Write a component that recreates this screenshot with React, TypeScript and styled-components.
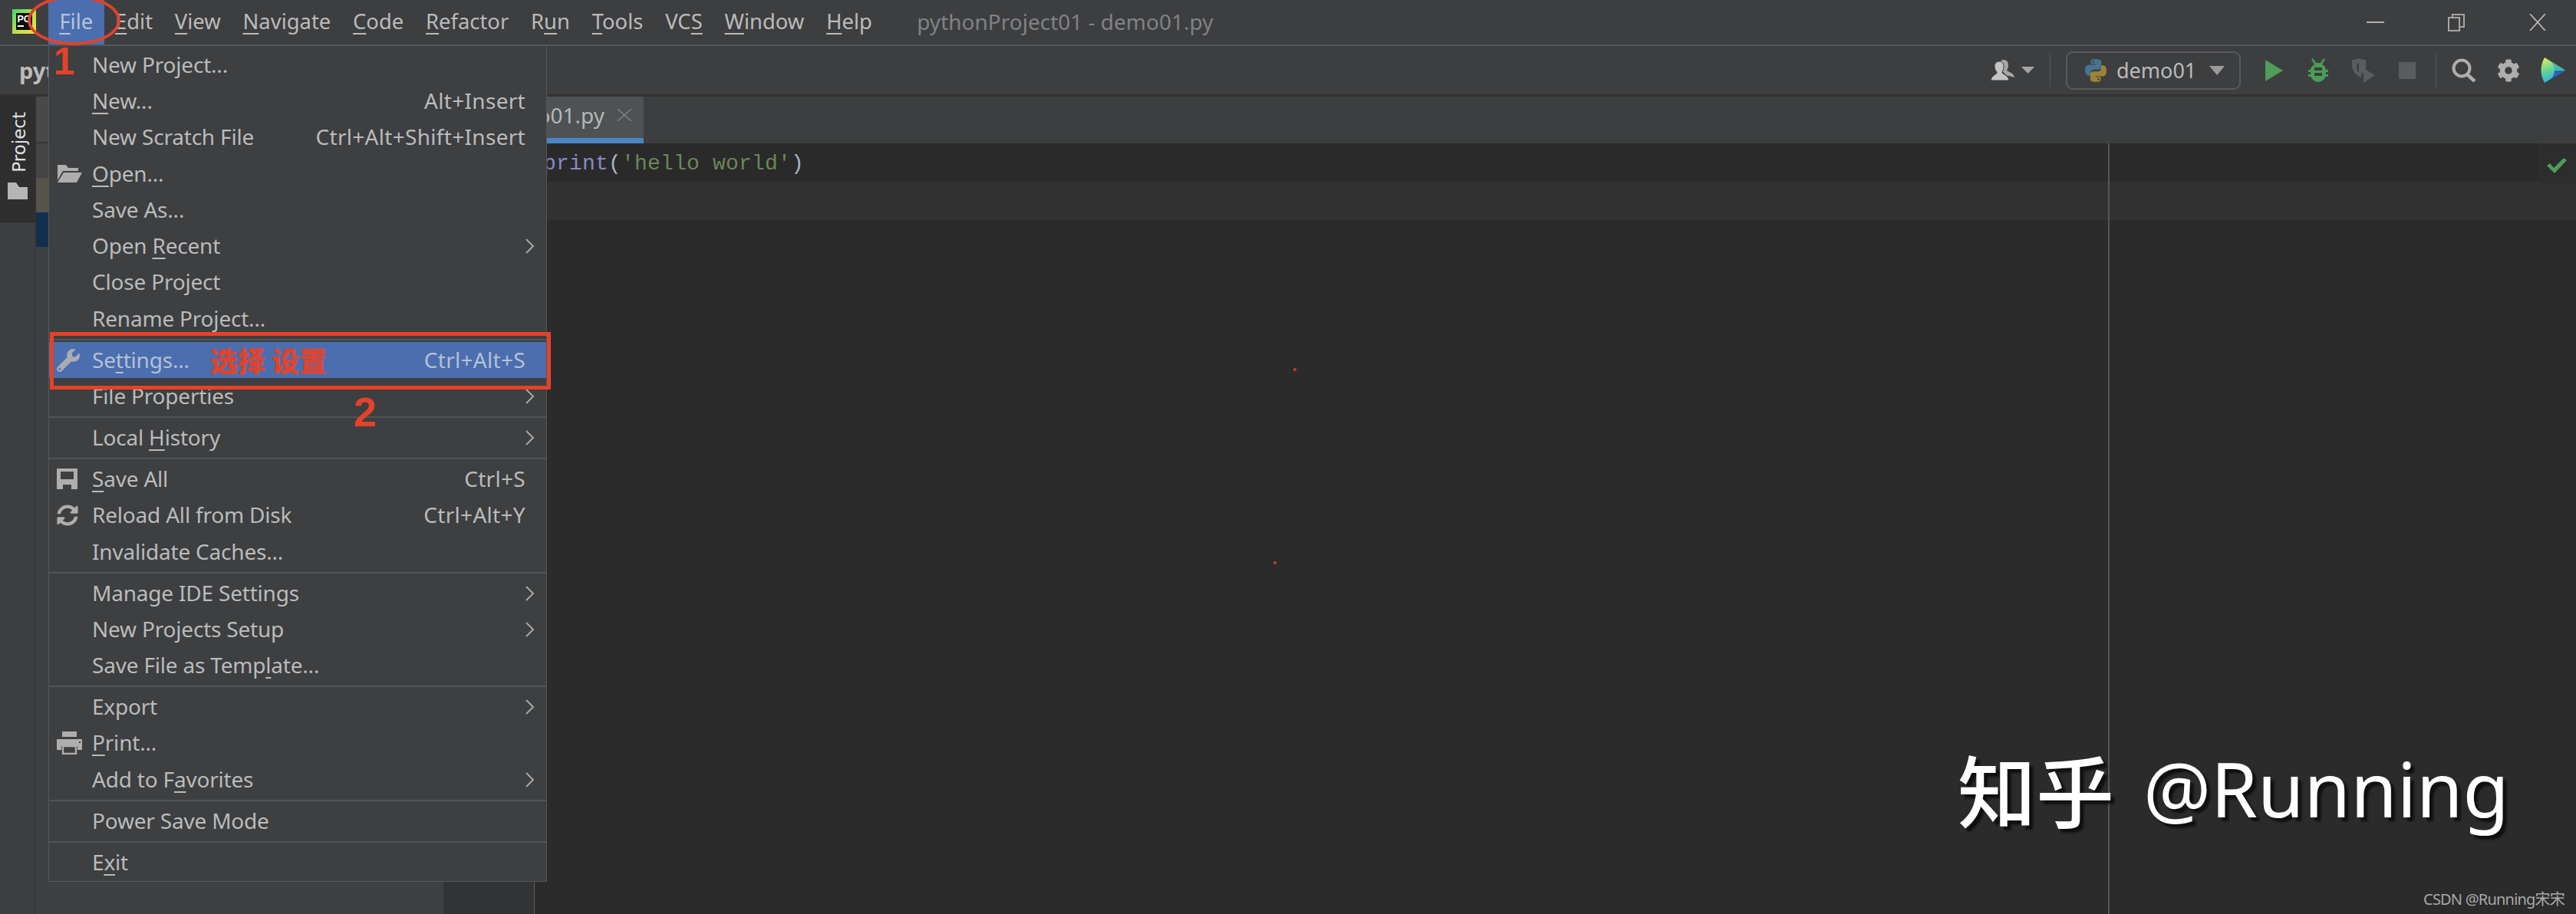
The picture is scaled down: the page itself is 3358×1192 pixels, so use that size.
import React from "react";
import styled, { createGlobalStyle } from "styled-components";
import { FaCog, FaSyncAlt, FaWrench } from "react-icons/fa";

const UI = `"Noto Sans", "Open Sans", sans-serif`;
const RED = "#e3432a";

const Global = createGlobalStyle`
  html, body { margin: 0; padding: 0; background: #2b2b2b; }
  * { box-sizing: border-box; }
`;

const Screen = styled.div`
  position: relative;
  width: 3358px;
  height: 1192px;
  overflow: hidden;
  display: flex;
  flex-direction: column;
  background: #3c3e40;
  font-family: ${UI};
  font-size: 28px;
  color: #bbbbbb;
`;

/* ---------- title bar ---------- */
const TitleBar = styled.header`
  height: 60px;
  flex: none;
  display: flex;
  align-items: stretch;
  padding-left: 16px;
  background: #3d3e40;
  border-bottom: 2px solid #545658;
`;
const LogoBox = styled.div`
  width: 47px;
  display: flex;
  align-items: flex-start;
  padding-top: 12px;
`;
const MenuBar = styled.nav`
  display: flex;
  align-items: stretch;
`;
const MenuBarItem = styled.div<{ $active?: boolean }>`
  padding: 0 14.4px 3px;
  display: flex;
  align-items: center;
  font-size: 27.4px;
  line-height: 1;
  background: ${(p) => (p.$active ? "#4b6eaf" : "transparent")};
  color: ${(p) => (p.$active ? "#b8c4da" : "#bbbbbb")};
`;
const WindowTitle = styled.div`
  margin-left: 44px;
  padding-bottom: 3px;
  display: flex;
  align-items: center;
  color: #808284;
`;
const WindowControls = styled.div`
  margin-left: auto;
  display: flex;
  gap: 6px;
`;
const WindowButton = styled.div`
  width: 100px;
  display: flex;
  align-items: center;
  justify-content: center;
`;
const Mn = styled.span`
  text-decoration: underline;
  text-decoration-thickness: 2px;
  text-underline-offset: 5px;
`;

/* ---------- toolbar ---------- */
const Toolbar = styled.div`
  height: 66px;
  flex: none;
  display: flex;
  align-items: center;
  padding-left: 25px;
  background: #3d3e40;
  border-bottom: 3px solid #323232;
`;
const ProjectName = styled.div`
  width: 38px;
  overflow: hidden;
  white-space: nowrap;
  font-weight: 700;
  font-size: 29px;
`;
const ToolGroup = styled.div`
  margin-left: auto;
  display: flex;
  align-items: center;
  padding-right: 1px;
`;
const UserButton = styled.div`
  display: flex;
  align-items: center;
  gap: 8px;
`;
const ToolSep = styled.div<{ $w: number }>`
  width: ${(p) => p.$w}px;
  height: 44px;
  display: flex;
  justify-content: center;
  &::before {
    content: "";
    width: 1px;
    background: #55575a;
  }
`;
const RunConfig = styled.div`
  width: 228px;
  height: 50px;
  margin-right: 14px;
  display: flex;
  align-items: center;
  padding-left: 21px;
  border: 2px solid #585a5c;
  border-radius: 9px;
  font-size: 27px;
  gap: 11px;
`;
const RunCaret = styled.div`
  margin-left: auto;
  margin-right: 19px;
  width: 0;
  height: 0;
  border-left: 10px solid transparent;
  border-right: 10px solid transparent;
  border-top: 12px solid #9a9a9a;
`;
const ToolSlot = styled.div`
  width: 58px;
  display: flex;
  justify-content: center;
  align-items: center;
`;

/* ---------- workspace ---------- */
const Workspace = styled.div`
  flex: 1;
  min-height: 0;
  display: flex;
`;
const ToolStrip = styled.aside`
  width: 47px;
  flex: none;
  background: #3c3e40;
  border-right: 1px solid #323335;
`;
const StripTab = styled.div`
  height: 164px;
  display: flex;
  flex-direction: column;
  align-items: center;
  padding-top: 20px;
  gap: 13px;
  background: #2e2e2f;
`;
const StripLabel = styled.div`
  writing-mode: vertical-rl;
  transform: rotate(180deg) translateX(-2px);
  font-family: "DejaVu Sans", ${UI};
  font-size: 23px;
  line-height: 26px;
  color: #e2e2e2;
`;
const ProjectPanel = styled.section`
  width: 531px;
  flex: none;
  display: flex;
  flex-direction: column;
  background: #3e4042;
`;
const PanelHeader = styled.div`
  height: 61px;
  flex: none;
  background: #47494b;
  border-bottom: 2px solid #333436;
`;
const TreeRow = styled.div<{ $bg: string }>`
  height: 45px;
  flex: none;
  background: ${(p) => p.$bg};
`;
const EditorColumn = styled.main`
  flex: 1;
  min-width: 0;
  display: flex;
  flex-direction: column;
`;
const TabBar = styled.div`
  height: 61px;
  flex: none;
  display: flex;
  background: #3d3e40;
`;
const FileTab = styled.div`
  width: 261px;
  height: 61px;
  display: flex;
  align-items: center;
  justify-content: flex-end;
  gap: 16px;
  padding: 0 15px 7px 0;
  background: #4e5254;
  border-bottom: 7px solid #4a86c5;
  color: #b4b6b8;
  font-size: 28px;
`;
const EditorBody = styled.div`
  position: relative;
  flex: 1;
  min-height: 0;
  display: flex;
`;
const Gutter = styled.div`
  width: 119px;
  flex: none;
  background: #313335;
  border-right: 1px solid #5a5c5e;
`;
const Code = styled.div`
  flex: 1;
  display: flex;
  flex-direction: column;
  background: #2b2b2b;
`;
const CodeLine = styled.div<{ $bg: string }>`
  height: 50px;
  padding: 2px 0 0 11px;
  display: flex;
  align-items: center;
  background: ${(p) => p.$bg};
  font-family: "Liberation Mono", monospace;
  font-size: 28px;
  letter-spacing: 0.2px;
  white-space: pre;
`;
const Tok = styled.span<{ $c: string }>`
  color: ${(p) => p.$c};
`;
const MarginGuide = styled.div`
  position: absolute;
  top: 0;
  bottom: 0;
  left: 2170px;
  width: 2px;
  background: #555658;
`;
const InspectBadge = styled.div`
  position: absolute;
  top: 0;
  right: 0;
  width: 50px;
  height: 53px;
  display: flex;
  align-items: flex-start;
  padding: 19px 0 0 12px;
  background: #2d2d2d;
  border-bottom-left-radius: 10px;
`;

/* ---------- dropdown ---------- */
const Dropdown = styled.div`
  position: absolute;
  left: 63px;
  top: 60px;
  width: 650px;
  height: 1090px;
  padding-top: 1px;
  background: #3d3f41;
  border: 1px solid #55575a;
  border-top: none;
`;
const Row = styled.div<{ $active?: boolean }>`
  height: 47.3px;
  display: flex;
  align-items: center;
  background: ${(p) => (p.$active ? "#4b6eaf" : "transparent")};
  color: ${(p) => (p.$active ? "#b4c0d6" : "#bbbbbb")};
`;
const IconSlot = styled.div`
  width: 56px;
  padding-left: 10px;
  flex: none;
  display: flex;
  align-items: center;
`;
const Label = styled.div`
  flex: 1;
  padding-bottom: 2px;
  white-space: pre;
  letter-spacing: -0.2px;
`;
const Shortcut = styled.div`
  padding-bottom: 2px;
  letter-spacing: 0.3px;
`;
const ArrowSlot = styled.div`
  width: 27px;
  flex: none;
  display: flex;
`;
const Sep = styled.div`
  height: 6.7px;
  display: flex;
  align-items: center;
  &::before {
    content: "";
    flex: 1;
    height: 2px;
    background: #525456;
  }
`;

/* ---------- annotations ---------- */
const FileCircle = styled.div`
  position: absolute;
  left: 36px;
  top: -6px;
  width: 121px;
  height: 65px;
  border: 4px solid ${RED};
  border-radius: 50%;
`;
const Step = styled.div<{ $x: number; $y: number; $s: number }>`
  position: absolute;
  left: ${(p) => p.$x}px;
  top: ${(p) => p.$y}px;
  font-family: "Liberation Sans", sans-serif;
  font-weight: 700;
  font-size: ${(p) => p.$s}px;
  line-height: 1;
  color: ${RED};
`;
const SettingsBox = styled.div`
  position: absolute;
  left: 65px;
  top: 433px;
  width: 653px;
  height: 75px;
  border: 5px solid ${RED};
`;
const SettingsNote = styled.div`
  position: absolute;
  left: 274px;
  top: 448px;
  font-family: "Noto Sans CJK SC", sans-serif;
  font-weight: 900;
  font-size: 36px;
  line-height: 42px;
  color: ${RED};
  white-space: pre;
`;
const Speck = styled.div<{ $x: number; $y: number }>`
  position: absolute;
  left: ${(p) => p.$x}px;
  top: ${(p) => p.$y}px;
  width: 4px;
  height: 4px;
  border-radius: 50%;
  background: #c8402f;
`;
const Watermark = styled.div`
  position: absolute;
  left: 2552px;
  top: 962px;
  display: flex;
  align-items: center;
  gap: 38px;
  color: #ffffff;
  line-height: 1.3;
  text-shadow: 5px 5px 3px rgba(0, 0, 0, 0.65);
  white-space: nowrap;
`;
const WatermarkCn = styled.span`
  font-family: "Noto Sans CJK SC", sans-serif;
  font-weight: 500;
  font-size: 102px;
`;
const WatermarkEn = styled.span`
  font-family: "Noto Sans", sans-serif;
  font-size: 98px;
`;
const Credit = styled.div`
  position: absolute;
  right: 15px;
  top: 1159px;
  font-family: "Noto Sans", "Noto Sans CJK SC", sans-serif;
  font-size: 20px;
  line-height: 28px;
  letter-spacing: -0.8px;
  color: #a8a8a8;
`;

/* ---------- helpers ---------- */
function Mnemonic({ text }: { text: string }) {
  const i = text.indexOf("&");
  if (i < 0) return <>{text}</>;
  return (
    <>
      {text.slice(0, i)}
      <Mn>{text[i + 1]}</Mn>
      {text.slice(i + 2)}
    </>
  );
}

const PcLogo = () => (
  <svg width="31" height="32" viewBox="0 0 31 32">
    <defs>
      <linearGradient id="pcg" x1="0" y1="0" x2="1" y2="1">
        <stop offset="0" stopColor="#3fd66f" />
        <stop offset="0.5" stopColor="#b8e04a" />
        <stop offset="1" stopColor="#f2e24a" />
      </linearGradient>
    </defs>
    <rect width="31" height="32" fill="url(#pcg)" />
    <rect x="5" y="5" width="21" height="22" fill="#0a0f0a" />
    <text x="6.5" y="17" fontFamily="Liberation Sans" fontWeight="700" fontSize="12.5" fill="#fff">PC</text>
    <rect x="7" y="21" width="8" height="2" fill="#fff" />
  </svg>
);

const FolderOpen = () => (
  <svg width="33" height="24" viewBox="0 0 33 24">
    <path d="M1 0h11l3 4h13v4H8L1 20z" fill="#aeaeae" />
    <path d="M9 10h24l-7 13H1z" fill="#aeaeae" />
  </svg>
);
const FolderClosed = () => (
  <svg width="26" height="22" viewBox="0 0 26 22">
    <path d="M0 0h11l4 6h11v16H0z" fill="#b5b5b5" />
  </svg>
);
const SaveIcon = () => (
  <svg width="27" height="27" viewBox="0 0 27 27">
    <path fillRule="evenodd" d="M0 0h27v27H0zM5 4v10h17V4zM8 21v6h11v-6z" fill="#aeaeae" />
  </svg>
);
const PrintIcon = () => (
  <svg width="33" height="30" viewBox="0 0 33 30">
    <rect x="7" y="0" width="19" height="7" fill="#aeaeae" />
    <path d="M0 10h33v14h-6v-5H6v5H0z" fill="#aeaeae" />
    <path d="M8 19h17v10H8z" fill="none" stroke="#aeaeae" strokeWidth="2.4" />
    <rect x="29" y="13" width="2" height="2" fill="#3d3f41" />
  </svg>
);
const Chevron = () => (
  <svg width="12" height="20" viewBox="0 0 12 20">
    <path d="M1 1l9 9-9 9" fill="none" stroke="#a8a8a8" strokeWidth="2" />
  </svg>
);
const UserIcon = () => (
  <svg width="32" height="27" viewBox="0 0 32 27">
    <path d="M17 0c4 0 6 3 6 7 0 3-1 5-2 7 3 2 9 3 10 9l-11-3-6-7c-1-2-2-5-2-7 0-4 2-6 5-6z" fill="#a5a5a5" />
    <path d="M11 2c4 0 6 3 6 7s-2 6-2 8c1 2 8 3 9 10H0c1-7 8-8 8-10S5 13 5 9s2-7 6-7z" fill="#c4c4c4" stroke="#3d3e40" strokeWidth="1" />
  </svg>
);
const PythonIcon = () => (
  <svg width="32" height="32" viewBox="0 0 32 32">
    <path d="M15.9 1C9 1 9.5 4 9.5 4v3.5H16v1H7S2 8 2 15.5s4.5 7.2 4.5 7.2H9V19s-.2-4.2 4.2-4.2h6.1s4 .1 4-3.8V5s.6-4-7.4-4z" fill="#47748f" />
    <circle cx="12.6" cy="4.6" r="1.2" fill="#3d3e40" />
    <g transform="rotate(180 16 16)">
      <path d="M15.9 1C9 1 9.5 4 9.5 4v3.5H16v1H7S2 8 2 15.5s4.5 7.2 4.5 7.2H9V19s-.2-4.2 4.2-4.2h6.1s4 .1 4-3.8V5s.6-4-7.4-4z" fill="#9c8436" />
      <circle cx="12.6" cy="4.6" r="1.2" fill="#3d3e40" />
    </g>
  </svg>
);
const PlayIcon = () => (
  <svg width="23" height="28" viewBox="0 0 23 28">
    <path d="M0 0l23 14L0 28z" fill="#4f9d58" />
  </svg>
);
const BugIcon = () => (
  <svg width="28" height="31" viewBox="0 0 28 31">
    <path d="M7 0l4 6h6l4-6 2 1-4 7c3 2 5 4 5 7h3v3h-3v3h3v3h-3.500C22 28 18 31 14 31S6 28 4.500 24H1v-3h3v-3H1v-3h3c0-3 2-5 5-7L5 1z" fill="#4a9d55" />
    <rect x="9" y="12" width="10" height="4" fill="#3d3e40" />
    <rect x="9" y="19" width="10" height="4" fill="#3d3e40" />
  </svg>
);
const CoverageIcon = () => (
  <svg width="33" height="32" viewBox="0 0 33 32">
    <path d="M2 2c5 0 8-1 9-2 2 1 5 2 9 2v13l-6 6v4c-7-3-12-9-12-16z" fill="#5b5c5d" />
    <path d="M8 7c1 0 2-1 3-1v13c-2-2-3-5-3-8z" fill="#3d3e40" />
    <path d="M17 13l15 9-15 10z" fill="#5b5c5d" />
  </svg>
);
const StopIcon = () => (
  <svg width="22" height="22" viewBox="0 0 22 22">
    <rect width="22" height="22" fill="#5b5c5d" />
  </svg>
);
const SearchIcon = () => (
  <svg width="33" height="31" viewBox="0 0 33 31">
    <circle cx="13" cy="13" r="10.500" fill="none" stroke="#aeaeae" strokeWidth="4" />
    <path d="M20 21l10 9" stroke="#aeaeae" strokeWidth="4.500" />
  </svg>
);
const ToolboxIcon = () => (
  <svg width="32" height="33" viewBox="0 0 32 33">
    <defs>
      <linearGradient id="tbg" x1="0.2" y1="0" x2="0.5" y2="1">
        <stop offset="0" stopColor="#dcea5c" />
        <stop offset="0.5" stopColor="#62d39a" />
        <stop offset="1" stopColor="#2aa6e0" />
      </linearGradient>
    </defs>
    <path d="M5 0c-6 10-6 23 0 33l27-16.500z" fill="url(#tbg)" />
    <path d="M18 17h14L5 33c8-3 13-9 13-16z" fill="#2a63bd" />
    <path d="M5 0l27 16.500H18C18 9 12 3 5 0z" fill="#2f9fb0" opacity="0.55" />
  </svg>
);
const CheckIcon = () => (
  <svg width="26" height="20" viewBox="0 0 26 20">
    <path d="M0 10l4-3 5 6L22 0l4 3-16 17z" fill="#4f9d58" />
  </svg>
);

type Item =
  | { sep: true }
  | { label: string; key?: string; arrow?: boolean; icon?: React.ReactNode; active?: boolean };

const items: Item[] = [
  { label: "New Project..." },
  { label: "&New...", key: "Alt+Insert" },
  { label: "New Scratch File", key: "Ctrl+Alt+Shift+Insert" },
  { label: "&Open...", icon: <FolderOpen /> },
  { label: "Save As..." },
  { label: "Open &Recent", arrow: true },
  { label: "Close Project" },
  { label: "Rename Project..." },
  { sep: true },
  { label: "Se&ttings...", key: "Ctrl+Alt+S", active: true, icon: <FaWrench size={30} color="#a9acb3" /> },
  { label: "File Properties", arrow: true },
  { sep: true },
  { label: "Local &History", arrow: true },
  { sep: true },
  { label: "&Save All", key: "Ctrl+S", icon: <SaveIcon /> },
  { label: "Reload All from Disk", key: "Ctrl+Alt+Y", icon: <FaSyncAlt size={28} color="#aeaeae" /> },
  { label: "Invalidate Caches..." },
  { sep: true },
  { label: "Manage IDE Settings", arrow: true },
  { label: "New Projects Setup", arrow: true },
  { label: "Save File as Temp&late..." },
  { sep: true },
  { label: "Export", arrow: true },
  { label: "&Print...", icon: <PrintIcon /> },
  { label: "Add to F&avorites", arrow: true },
  { sep: true },
  { label: "Power Save Mode" },
  { sep: true },
  { label: "E&xit" },
];

const menus = ["&File", "&Edit", "&View", "&Navigate", "&Code", "&Refactor", "R&un", "&Tools", "VC&S", "&Window", "&Help"];

export default function App() {
  return (
    <Screen>
      <Global />
      <TitleBar>
        <LogoBox>
          <PcLogo />
        </LogoBox>
        <MenuBar>
          {menus.map((m, i) => (
            <MenuBarItem key={m} $active={i === 0}>
              <span>
                <Mnemonic text={m} />
              </span>
            </MenuBarItem>
          ))}
        </MenuBar>
        <WindowTitle>pythonProject01 - demo01.py</WindowTitle>
        <WindowControls>
          <WindowButton>
            <svg width="23" height="2" viewBox="0 0 23 2">
              <rect width="23" height="2" fill="#b0b0b0" />
            </svg>
          </WindowButton>
          <WindowButton>
            <svg width="22" height="23" viewBox="0 0 22 23" fill="none" stroke="#a5a5a5" strokeWidth="2">
              <rect x="1" y="5" width="14" height="17" />
              <path d="M6 5V1h15v16h-6" />
            </svg>
          </WindowButton>
          <WindowButton>
            <svg width="22" height="22" viewBox="0 0 22 22" fill="none" stroke="#b4b4b4" strokeWidth="1.800">
              <path d="M1 0l20 22M21 0L1 22" />
            </svg>
          </WindowButton>
        </WindowControls>
      </TitleBar>

      <Toolbar>
        <ProjectName>pythonProject01</ProjectName>
        <ToolGroup>
          <UserButton>
            <UserIcon />
            <svg width="17" height="9" viewBox="0 0 17 9">
              <path d="M0 0h17l-8.500 9z" fill="#a5a5a5" />
            </svg>
          </UserButton>
          <ToolSep $w={41} />
          <RunConfig>
            <PythonIcon />
            demo01
            <RunCaret />
          </RunConfig>
          <ToolSlot><PlayIcon /></ToolSlot>
          <ToolSlot><BugIcon /></ToolSlot>
          <ToolSlot><CoverageIcon /></ToolSlot>
          <ToolSlot><StopIcon /></ToolSlot>
          <ToolSep $w={16} />
          <ToolSlot><SearchIcon /></ToolSlot>
          <ToolSlot><FaCog size={30} color="#aeaeae" /></ToolSlot>
          <ToolSlot><ToolboxIcon /></ToolSlot>
        </ToolGroup>
      </Toolbar>

      <Workspace>
        <ToolStrip>
          <StripTab>
            <StripLabel>Project</StripLabel>
            <FolderClosed />
          </StripTab>
        </ToolStrip>
        <ProjectPanel>
          <PanelHeader />
          <TreeRow $bg="#424446" />
          <TreeRow $bg="#55534a" />
          <TreeRow $bg="#11304f" />
        </ProjectPanel>
        <EditorColumn>
          <TabBar>
            <FileTab>
              <span>demo01.py</span>
              <svg width="20" height="16" viewBox="0 0 20 16" fill="none" stroke="#77797b" strokeWidth="1.800">
                <path d="M1 0l18 16M19 0L1 16" />
              </svg>
            </FileTab>
          </TabBar>
          <EditorBody>
            <Gutter />
            <Code>
              <CodeLine $bg="#2a2a2a">
                <Tok $c="#8888c6">print</Tok>
                <Tok $c="#a9b7c6">(</Tok>
                <Tok $c="#6a8759">'hello world'</Tok>
                <Tok $c="#a9b7c6">)</Tok>
              </CodeLine>
              <CodeLine $bg="#323232" />
            </Code>
            <MarginGuide />
            <InspectBadge>
              <CheckIcon />
            </InspectBadge>
          </EditorBody>
        </EditorColumn>
      </Workspace>

      <Dropdown>
        {items.map((it, i) =>
          "sep" in it ? (
            <Sep key={i} />
          ) : (
            <Row key={i} $active={it.active}>
              <IconSlot>{it.icon}</IconSlot>
              <Label>
                <Mnemonic text={it.label} />
              </Label>
              {it.key && <Shortcut>{it.key}</Shortcut>}
              <ArrowSlot>{it.arrow && <Chevron />}</ArrowSlot>
            </Row>
          )
        )}
      </Dropdown>

      <FileCircle />
      <Step $x={70} $y={55} $s={50}>1</Step>
      <SettingsBox />
      <SettingsNote>选择 设置</SettingsNote>
      <Step $x={461} $y={510} $s={54}>2</Step>
      <Speck $x={1686} $y={480} />
      <Speck $x={1660} $y={732} />

      <Watermark>
        <WatermarkCn>知乎</WatermarkCn>
        <WatermarkEn>@Running</WatermarkEn>
      </Watermark>
      <Credit>CSDN @Running宋宋</Credit>
    </Screen>
  );
}
